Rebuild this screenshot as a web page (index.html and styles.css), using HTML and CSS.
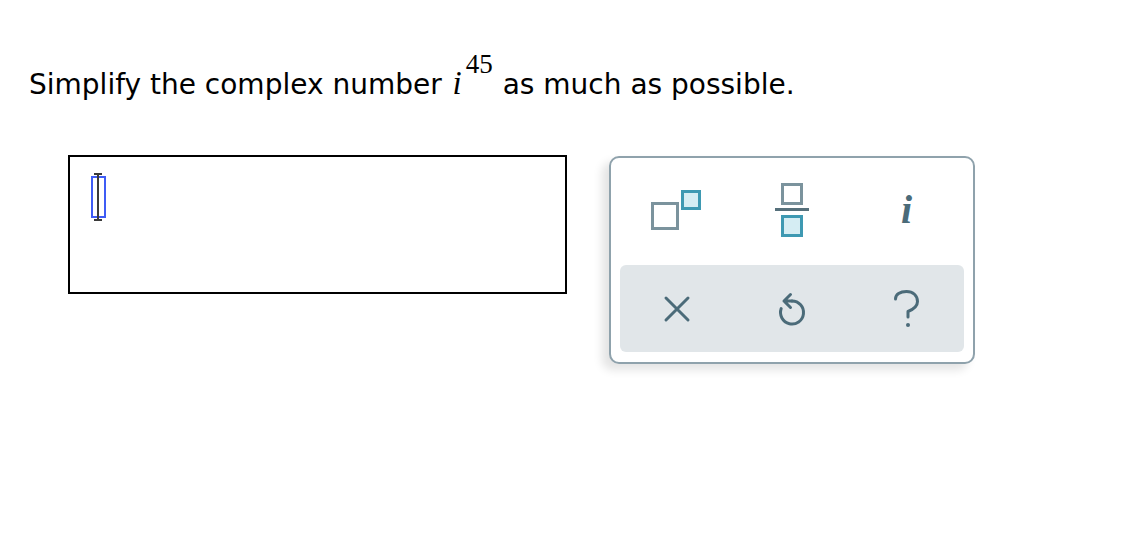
FILE: index.html
```html
<!DOCTYPE html>
<html lang="en">
<head>
<meta charset="utf-8">
<title>Simplify complex number</title>
<link rel="stylesheet" href="styles.css">
</head>
<body>
<div class="page">
  <p class="question">Simplify the complex number <span class="math"><i class="var">i</i><sup class="exp">45</sup></span> as much as possible.</p>
  <div class="work">
    <div class="answer">
      <span class="cursor"><span class="ibeam"></span></span>
    </div>
    <div class="keypad">
      <div class="keys">
        <button class="key" aria-label="superscript">
          <svg width="52" height="42" viewBox="0 0 52 42">
            <rect x="1.5" y="14.5" width="25" height="25" fill="none" stroke="#7b939d" stroke-width="3"/>
            <rect x="31.5" y="2.5" width="17" height="17" fill="#d5edf3" stroke="#3e99b2" stroke-width="3"/>
          </svg>
        </button>
        <button class="key" aria-label="fraction">
          <svg width="36" height="56" viewBox="0 0 36 56">
            <rect x="8.5" y="2.5" width="19" height="19" fill="none" stroke="#7b939d" stroke-width="3"/>
            <rect x="1" y="26" width="34" height="3" fill="#56707b"/>
            <rect x="8.5" y="34.5" width="19" height="19" fill="#d5edf3" stroke="#3e99b2" stroke-width="3"/>
          </svg>
        </button>
        <button class="key key-i" aria-label="i"><i>i</i></button>
      </div>
      <div class="tools">
        <button class="key" aria-label="clear">
          <svg width="30" height="30" viewBox="0 0 30 30">
            <path d="M4 4 L26 26 M26 4 L4 26" fill="none" stroke="#4b6b79" stroke-width="3" stroke-linecap="round"/>
          </svg>
        </button>
        <button class="key" aria-label="undo">
          <svg width="32" height="38" viewBox="0 0 32 38">
            <path d="M16 11 A11.5 11.5 0 1 1 5.2 18.6" fill="none" stroke="#4b6b79" stroke-width="3" stroke-linecap="round"/>
            <path d="M14.5 4.5 L8 11 L14.5 17.5 M8 11 L16 11" fill="none" stroke="#4b6b79" stroke-width="3" stroke-linecap="round" stroke-linejoin="round"/>
          </svg>
        </button>
        <button class="key" aria-label="help">
          <svg width="32" height="42" viewBox="0 0 32 42">
            <path d="M4.5 11 C4.5 6.5 9 3.5 15.5 3.5 C22 3.5 26.5 7.5 26.5 13.5 C26.5 19 22 21.5 17 23.5 L17 29" fill="none" stroke="#4b6b79" stroke-width="3" stroke-linecap="round" stroke-linejoin="round"/>
            <circle cx="17" cy="37" r="2" fill="#4b6b79"/>
          </svg>
        </button>
      </div>
    </div>
  </div>
</div>
</body>
</html>
```

FILE: styles.css
```css
html, body {
  margin: 0;
  padding: 0;
  background: #ffffff;
}

.page {
  width: 1127px;
  height: 557px;
  overflow: hidden;
}

.question {
  box-sizing: border-box;
  height: 100px;
  margin: 0;
  padding: 66px 0 0 29px;
  font-family: "DejaVu Sans", Verdana, sans-serif;
  font-size: 28px;
  line-height: 34px;
  color: #000;
  white-space: nowrap;
}

.math {
  font-family: "Liberation Serif", "Times New Roman", serif;
  margin-right: 1px;
  margin-left: 2px;
}

.var {
  font-size: 33px;
  font-style: italic;
}

.exp {
  font-size: 27px;
  vertical-align: baseline;
  position: relative;
  top: -21px;
  margin-left: 4px;
}

.work {
  display: flex;
  align-items: flex-start;
  gap: 42px;
  padding: 55px 0 0 68px;
}

.answer {
  box-sizing: border-box;
  width: 499px;
  height: 139px;
  border: 2px solid #000;
  padding: 19px 0 0 21px;
}

.cursor {
  display: block;
  position: relative;
  box-sizing: border-box;
  width: 15px;
  height: 42px;
  border: 2px solid #3f5cf5;
}

.ibeam {
  position: absolute;
  left: 4px;
  top: -5px;
  bottom: -5px;
  width: 2px;
  background: #3a3a3a;
}

.ibeam::before,
.ibeam::after {
  content: "";
  position: absolute;
  left: -3px;
  width: 8px;
  height: 2px;
  background: #3a3a3a;
}

.ibeam::before { top: 0; }
.ibeam::after { bottom: 0; }

.keypad {
  box-sizing: border-box;
  margin-top: 1px;
  width: 366px;
  height: 208px;
  border: 2px solid #8fa2ac;
  border-radius: 10px;
  padding: 0 9px 10px;
  display: flex;
  flex-direction: column;
  background: #fff;
  box-shadow: -7px 6px 10px rgba(0, 0, 0, 0.11);
}

.keys {
  height: 107px;
  display: grid;
  grid-template-columns: repeat(3, 1fr);
  align-items: center;
  justify-items: center;
  padding-bottom: 4px;
  box-sizing: border-box;
}

.tools {
  flex: 1;
  background: #e1e6e9;
  border-radius: 6px;
  display: grid;
  grid-template-columns: repeat(3, 1fr);
  align-items: center;
  justify-items: center;
}

.key {
  border: 0;
  background: transparent;
  padding: 0;
  margin: 0;
  display: flex;
  align-items: center;
  justify-content: center;
}

.key svg {
  display: block;
}

.key-i {
  font-family: "Liberation Serif", "Times New Roman", serif;
  font-weight: bold;
  font-size: 40px;
  color: #4b6b79;
  line-height: 1;
}
```
